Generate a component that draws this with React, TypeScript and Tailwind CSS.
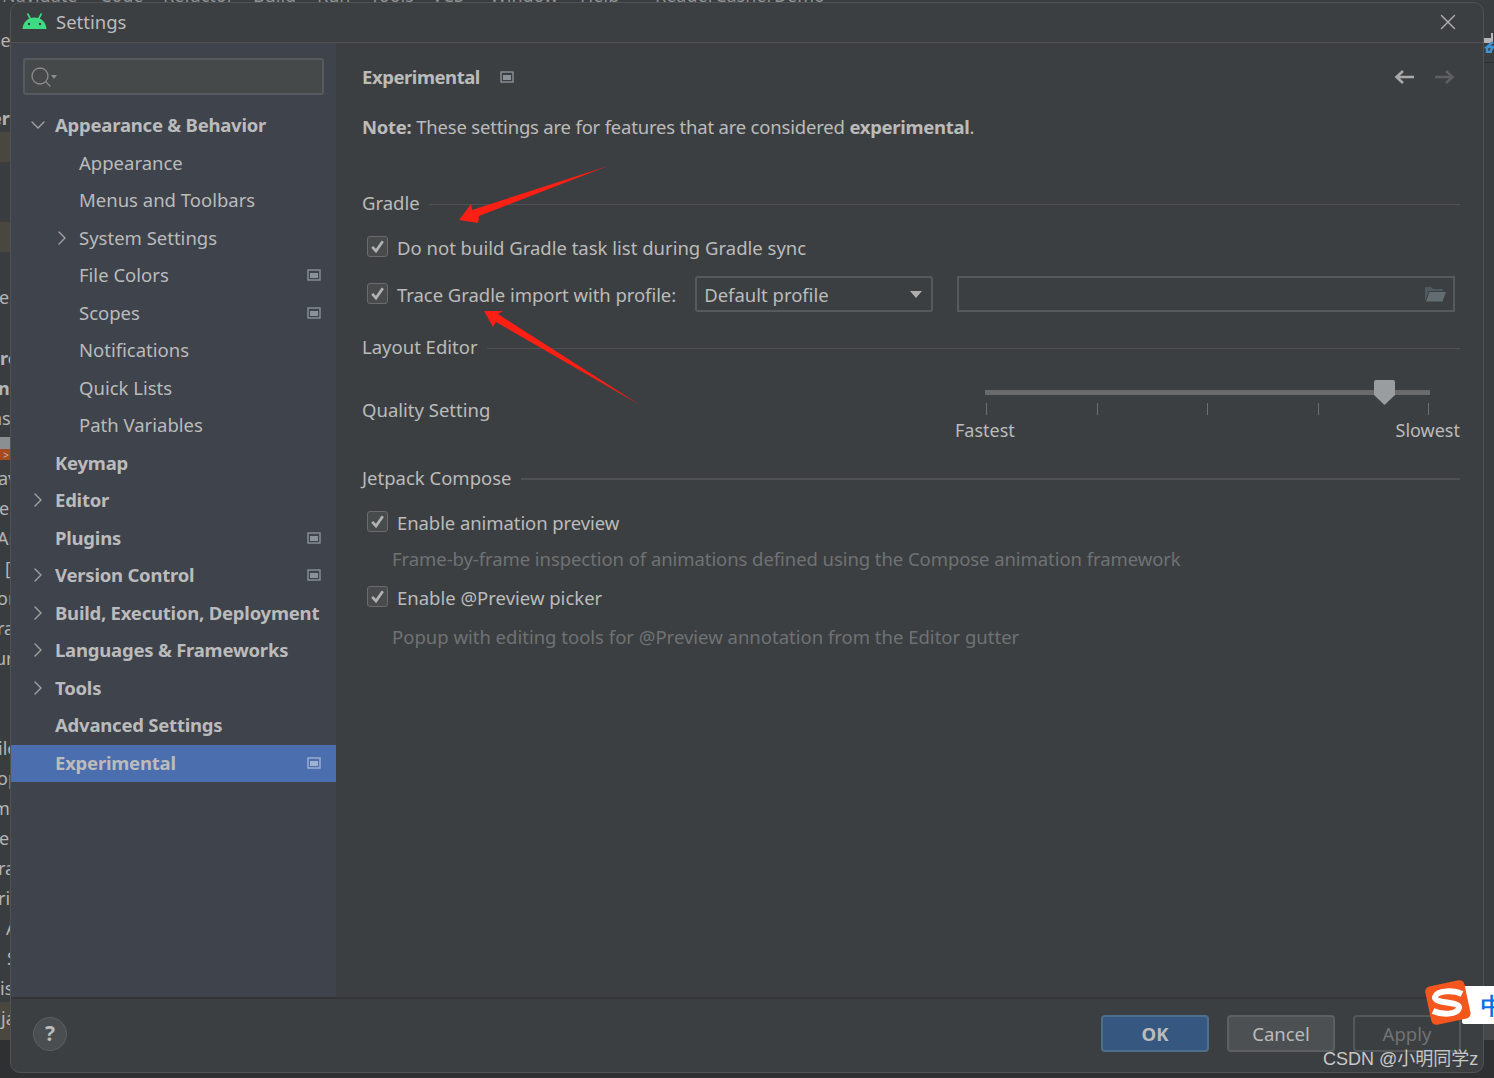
import { ChevronDown, ChevronRight, X, Search } from "lucide-react";

const FONT = "font-['Noto_Sans','Open_Sans',sans-serif]";

type NavItem = {
  label: string;
  bold?: boolean;
  depth?: number;
  arrow?: "open" | "closed";
  badge?: boolean;
  selected?: boolean;
};

const NAV: NavItem[] = [
  { label: "Appearance & Behavior", bold: true, arrow: "open" },
  { label: "Appearance", depth: 1 },
  { label: "Menus and Toolbars", depth: 1 },
  { label: "System Settings", depth: 1, arrow: "closed" },
  { label: "File Colors", depth: 1, badge: true },
  { label: "Scopes", depth: 1, badge: true },
  { label: "Notifications", depth: 1 },
  { label: "Quick Lists", depth: 1 },
  { label: "Path Variables", depth: 1 },
  { label: "Keymap", bold: true },
  { label: "Editor", bold: true, arrow: "closed" },
  { label: "Plugins", bold: true, badge: true },
  { label: "Version Control", bold: true, arrow: "closed", badge: true },
  { label: "Build, Execution, Deployment", bold: true, arrow: "closed" },
  { label: "Languages & Frameworks", bold: true, arrow: "closed" },
  { label: "Tools", bold: true, arrow: "closed" },
  { label: "Advanced Settings", bold: true },
  { label: "Experimental", bold: true, badge: true, selected: true },
];

// bits of the IDE window that peek out behind the dialog
const BEHIND = [
  { text: "se", x: -8, y: 40 },
  { text: "er", x: -9, y: 118, bold: true },
  { text: "eS", x: -1, y: 297 },
  { text: "re", x: 0, y: 358, bold: true },
  { text: "n", x: -2, y: 388, bold: true },
  { text: "ns", x: -9, y: 418 },
  { text: "av", x: -2, y: 478 },
  { text: "e", x: -1, y: 508 },
  { text: "Ar", x: -3, y: 538 },
  { text: "[", x: 5, y: 568 },
  { text: "or", x: -3, y: 598 },
  { text: "ra", x: -3, y: 628 },
  { text: "ur", x: -5, y: 658 },
  { text: "ile", x: -2, y: 748 },
  { text: "op", x: -3, y: 778 },
  { text: "m", x: -7, y: 808 },
  { text: "er", x: -1, y: 838 },
  { text: "ra", x: -2, y: 868 },
  { text: "ri", x: -2, y: 898 },
  { text: "A", x: 6, y: 928 },
  { text: "S", x: 7, y: 958 },
  { text: "is", x: 0, y: 988 },
  { text: "ja", x: 1, y: 1018 },
];

const TOP_MENU = [
  { text: "Navigate", x: 2 },
  { text: "Code", x: 100 },
  { text: "Refactor", x: 163 },
  { text: "Build", x: 253 },
  { text: "Run", x: 317 },
  { text: "Tools", x: 370 },
  { text: "VCS", x: 432 },
  { text: "Window", x: 490 },
  { text: "Help", x: 580 },
  { text: "ReaderCasherDemo", x: 655 },
];

function ProjectBadge({ light }: { light?: boolean }) {
  return (
    <svg width="14" height="14" viewBox="0 0 14 14" className="shrink-0">
      <rect x="1" y="2" width="12" height="10" fill="none" stroke={light ? "#9fb1d2" : "#8a9199"} strokeWidth="1.4" />
      <rect x="3" y="5" width="8" height="5" fill={light ? "#9fb1d2" : "#8a9199"} />
    </svg>
  );
}

function Checkbox() {
  return (
    <div className="mb-[3px] flex h-[21px] w-[21px] shrink-0 items-center justify-center rounded-[3px] border border-[#6b6b6b] bg-[#474b4c]">
      <svg width="15" height="15" viewBox="0 0 15 15">
        <path d="M2.2 7.8 L6 12 L12.8 2.2" fill="none" stroke="#b2b2b2" strokeWidth="2.7" />
      </svg>
    </div>
  );
}

function SectionTitle({ label, className, thick }: { label: string; className: string; thick?: boolean }) {
  return (
    <div className={`flex items-center gap-[9px] ${className}`}>
      <span className="text-[18.5px]">{label}</span>
      <div className={`mt-[2px] flex-1 ${thick ? "h-[2px] bg-[#4e5051]" : "h-px bg-[#515151]"}`} />
    </div>
  );
}

function CheckRow({ label, className }: { label: string; className: string }) {
  return (
    <div className={`flex items-center gap-[9px] pl-[5px] ${className}`}>
      <Checkbox />
      <span className="text-[18.5px]">{label}</span>
    </div>
  );
}

function Sidebar() {
  return (
    <div className="flex w-[325px] shrink-0 flex-col bg-[#3f434c]">
      <div className="mx-[12px] mt-[15px] flex h-[37px] items-center rounded-[3px] border-2 border-[#565a5e] bg-[#45494a] pl-[4px] text-[#8c8c8c]">
        <Search size={24} strokeWidth={1.3} />
        <div className="-ml-[2px] h-0 w-0 border-x-[3.5px] border-t-[4px] border-x-transparent border-t-[#8c8c8c]" />
      </div>
      <div className="mt-[11.5px] flex flex-col">
        {NAV.map((item) => (
          <div
            key={item.label}
            className={`flex h-[37.5px] items-center pr-[15px] ${item.selected ? "mt-[0.5px] bg-[#4b6eaf]" : ""}`}
          >
            <div className={`flex shrink-0 justify-end pr-[5px] ${item.depth ? "w-[68px]" : "w-[44px]"}`}>
              {item.arrow === "open" && <ChevronDown size={24} strokeWidth={1.4} className="text-[#a2a2a2]" />}
              {item.arrow === "closed" && <ChevronRight size={24} strokeWidth={1.4} className="text-[#a2a2a2]" />}
            </div>
            <span className={`flex-1 whitespace-nowrap text-[18.5px] ${item.bold ? "font-bold tracking-[-0.22px]" : ""}`}>
              {item.label}
            </span>
            {item.badge && <ProjectBadge light={item.selected} />}
          </div>
        ))}
      </div>
    </div>
  );
}

function QualitySlider() {
  return (
    <div className="relative h-[62px] w-[505px] shrink-0">
      <div className="absolute left-[30px] right-[30px] top-[10px] h-[5px] bg-[#6a6a6a]" />
      <div className="absolute left-[31px] right-[31px] top-[23px] flex justify-between">
        {[0, 1, 2, 3, 4].map((i) => (
          <div key={i} className="h-[12px] w-px bg-[#6e6e6e]" />
        ))}
      </div>
      <svg width="21" height="25" viewBox="0 0 21 25" className="absolute left-[419px] top-0">
        <path d="M0 2 Q0 0 2 0 H19 Q21 0 21 2 V15 L10.5 25 L0 15 Z" fill="#9a9d9f" />
      </svg>
      <span className="absolute left-0 top-[37px] text-[18px]">Fastest</span>
      <span className="absolute right-0 top-[37px] text-[18px]">Slowest</span>
    </div>
  );
}

function NavArrow({ flip, color }: { flip?: boolean; color: string }) {
  return (
    <svg width="20" height="14" viewBox="0 0 20 14" className={flip ? "-scale-x-100" : ""}>
      <path d="M20 7 H3 M9 1 L2.5 7 L9 13" fill="none" stroke={color} strokeWidth="2.6" />
    </svg>
  );
}

function ExperimentalPanel() {
  return (
    <div className="flex min-w-0 flex-1 flex-col pl-[26px] pr-[23px]">
      <div className="mt-[20px] flex h-[28px] items-center">
        <span className="text-[18.5px] font-bold tracking-[-0.45px]">Experimental</span>
        <div className="ml-[20px]">
          <ProjectBadge />
        </div>
        <div className="ml-auto mr-[5px] flex items-center gap-[21px]">
          <NavArrow color="#a9a9a9" />
          <NavArrow flip color="#5d5f61" />
        </div>
      </div>
      <p className="mt-[22px] h-[28px] text-[18.5px] leading-[28px]">
        <b className="tracking-[-0.3px]">Note:</b>{" "}
        <span className="tracking-[-0.2px]">These settings are for features that are considered</span>{" "}
        <b className="tracking-[-0.3px]">experimental</b>.
      </p>

      <SectionTitle label="Gradle" className="mt-[48px] h-[28px]" />
      <CheckRow label="Do not build Gradle task list during Gradle sync" className="mt-[17px] h-[28px]" />
      <div className="mt-[14px] flex h-[36px] items-center">
        <CheckRow label="Trace Gradle import with profile:" className="mt-[2px] h-[28px] tracking-[-0.05px]" />
        <div className="ml-[19px] flex h-[36px] w-[238px] items-center justify-between rounded-[3px] border-2 border-[#565a5e] pl-[7px] pr-[9px]">
          <span className="pt-[2px] text-[18.5px]">Default profile</span>
          <div className="h-0 w-0 border-x-[6px] border-t-[7px] border-x-transparent border-t-[#aeaeae]" />
        </div>
        <div className="ml-[24px] mr-[5px] flex h-[36px] flex-1 items-center justify-end border-2 border-[#565a5e] pr-[7px]">
          <svg width="22" height="16" viewBox="0 0 22 16">
            <path d="M1 15 V1 H7 L9 3 H19 V5 H5 L1 15 Z" fill="#4f5a5f" />
            <path d="M5.5 6 H22 L18.5 15.5 H2 Z" fill="#626d72" />
          </svg>
        </div>
      </div>

      <SectionTitle label="Layout Editor" className="mt-[21px] h-[28px]" />
      <div className="mt-[19px] flex h-[62px] items-start justify-between">
        <span className="mt-[16px] text-[18.5px]">Quality Setting</span>
        <QualitySlider />
      </div>

      <SectionTitle label="Jetpack Compose" thick className="mt-[22px] h-[28px]" />
      <CheckRow label="Enable animation preview" className="mt-[17px] h-[28px] tracking-[-0.08px]" />
      <p className="ml-[30px] mt-[8px] h-[28px] text-[18.5px] leading-[28px] tracking-[-0.07px] text-[#6f7274]">
        Frame-by-frame inspection of animations defined using the Compose animation framework
      </p>
      <CheckRow label="Enable @Preview picker" className="mt-[11px] h-[28px]" />
      <p className="ml-[30px] mt-[11px] h-[28px] text-[18.5px] leading-[28px] text-[#6f7274]">
        Popup with editing tools for @Preview annotation from the Editor gutter
      </p>
    </div>
  );
}

export default function App() {
  return (
    <div className={`relative h-[1078px] w-[1494px] overflow-hidden bg-[#3a3d3f] text-[#bbbbbb] ${FONT}`}>
      {/* IDE window behind the dialog */}
      {TOP_MENU.map((m) => (
        <span
          key={m.text}
          className="absolute -top-[15px] whitespace-nowrap text-[18px] leading-[20px] text-[#8f9294]"
          style={{ left: m.x }}
        >
          {m.text}
        </span>
      ))}
      <div className="absolute left-0 top-[132px] h-[30px] w-[12px] bg-[#4a4740]" />
      <div className="absolute left-0 top-[222px] h-[30px] w-[12px] bg-[#4a4740]" />
      <div className="absolute left-0 top-[437px] h-[12px] w-[12px] bg-[#8a8f93]" />
      <div className="absolute left-0 top-[449px] flex h-[11px] w-[12px] items-center justify-center bg-[#a8481f] text-[10px] leading-none">
        &gt;
      </div>
      <div className="absolute bottom-0 left-0 right-0 h-[38px] bg-[#2e3032]" />
      <div className="absolute left-0 top-[1002px] h-[38px] w-[12px] bg-[#4a4740]" />
      <div className="absolute right-0 top-[1003px] h-[37px] w-[12px] bg-[#46484a]" />
      <div className="absolute right-0 top-[62px] h-px w-[12px] bg-[#2b2d2f]" />
      <svg width="10" height="21" viewBox="0 0 10 21" className="absolute left-[1484px] top-[32px]">
        <path d="M0 6 H7 V1 H9 V11 H0 Z" fill="#b5b5b5" />
        <path d="M9 10 L3 15 L9 15 L6 20 M3 15 V20 H8" fill="none" stroke="#3c94d4" strokeWidth="2.4" />
      </svg>
      {BEHIND.map((b) => (
        <span
          key={b.y}
          className={`absolute whitespace-nowrap text-[18px] leading-[24px] text-[#b4b4b4] ${b.bold ? "font-bold" : ""}`}
          style={{ left: b.x, top: b.y - 12 }}
        >
          {b.text}
        </span>
      ))}

      {/* Dialog */}
      <div className="absolute left-[10px] top-[2px] flex h-[1071px] w-[1474px] flex-col overflow-hidden rounded-[10px] border border-[#505254] bg-[#3c3f41]">
        <div className="flex h-[40px] shrink-0 items-center border-b border-[#515151] pb-[2px] pl-[11px] pr-[22px]">
          <svg width="25" height="17" viewBox="0 0 25 17">
            <path d="M0.5 16 C1 9 6 4.5 12.5 4.5 C19 4.5 24 9 24.5 16 Z" fill="#3ddc84" />
            <path d="M5.5 0.5 L8.5 6 M19.5 0.5 L16.5 6" stroke="#3ddc84" strokeWidth="1.6" />
            <circle cx="7" cy="11" r="1.2" fill="#3c3f41" />
            <circle cx="18" cy="11" r="1.2" fill="#3c3f41" />
          </svg>
          <span className="ml-[9px] text-[18.5px]">Settings</span>
          <X size={26} strokeWidth={1.3} className="ml-auto text-[#b0b0b0]" />
        </div>
        <div className="flex min-h-0 flex-1">
          <Sidebar />
          <ExperimentalPanel />
        </div>
        <div className="flex h-[75px] shrink-0 items-center border-t-2 border-[#323436] pb-[4px] pl-[22px] pr-[22px]">
          <div className="flex h-[34px] w-[34px] items-center justify-center rounded-full border border-[#5c5f61] bg-[#4b4e50] text-[21px] font-bold leading-none">
            ?
          </div>
          <div className="ml-auto flex h-[37px] w-[108px] items-center justify-center rounded-[4px] border-2 border-[#4c708c] bg-[#365880] text-[18.5px] font-bold">
            OK
          </div>
          <div className="ml-[18px] flex h-[37px] w-[108px] items-center justify-center rounded-[4px] border-2 border-[#5e6060] bg-[#4c5052] text-[18.5px]">
            Cancel
          </div>
          <div className="ml-[18px] flex h-[37px] w-[108px] items-center justify-center rounded-[4px] border-2 border-[#55585a] text-[18.5px] text-[#717375]">
            Apply
          </div>
        </div>
      </div>

      {/* Red annotation arrows */}
      <svg width="1494" height="1078" viewBox="0 0 1494 1078" className="pointer-events-none absolute left-0 top-0">
        <polygon points="459,220 471,204 472,210 608,166 479,216 478,223" fill="#fb1f14" />
        <polygon points="484,311 503,311 498,314 640,405 496,322 493,327" fill="#fb1f14" />
      </svg>

      {/* Input method badge */}
      <div className="absolute left-[1462px] top-[986px] flex h-[38px] w-[40px] items-center rounded-l-[2px] bg-white pl-[19px] text-[23px] font-bold leading-none text-[#0a6fe0]">
        中
      </div>
      <svg width="50" height="48" viewBox="0 0 50 48" className="absolute left-[1424px] top-[979px]">
        <rect x="4" y="4" width="40" height="39" rx="5" transform="rotate(-12 24 24)" fill="#f4561d" />
        <path d="M38 15 C30 11 13 11 11 18 C10 25 36 22 35 29 C33 36 18 36 9 32" fill="none" stroke="#fff" strokeWidth="6" />
      </svg>

      {/* Watermark */}
      <span className="absolute left-[1323px] top-[1046px] font-['Liberation_Sans','Noto_Sans_CJK_SC',sans-serif] text-[18px] leading-[26px] text-[#c8c8c8]">
        CSDN @小明同学z
      </span>
    </div>
  );
}
